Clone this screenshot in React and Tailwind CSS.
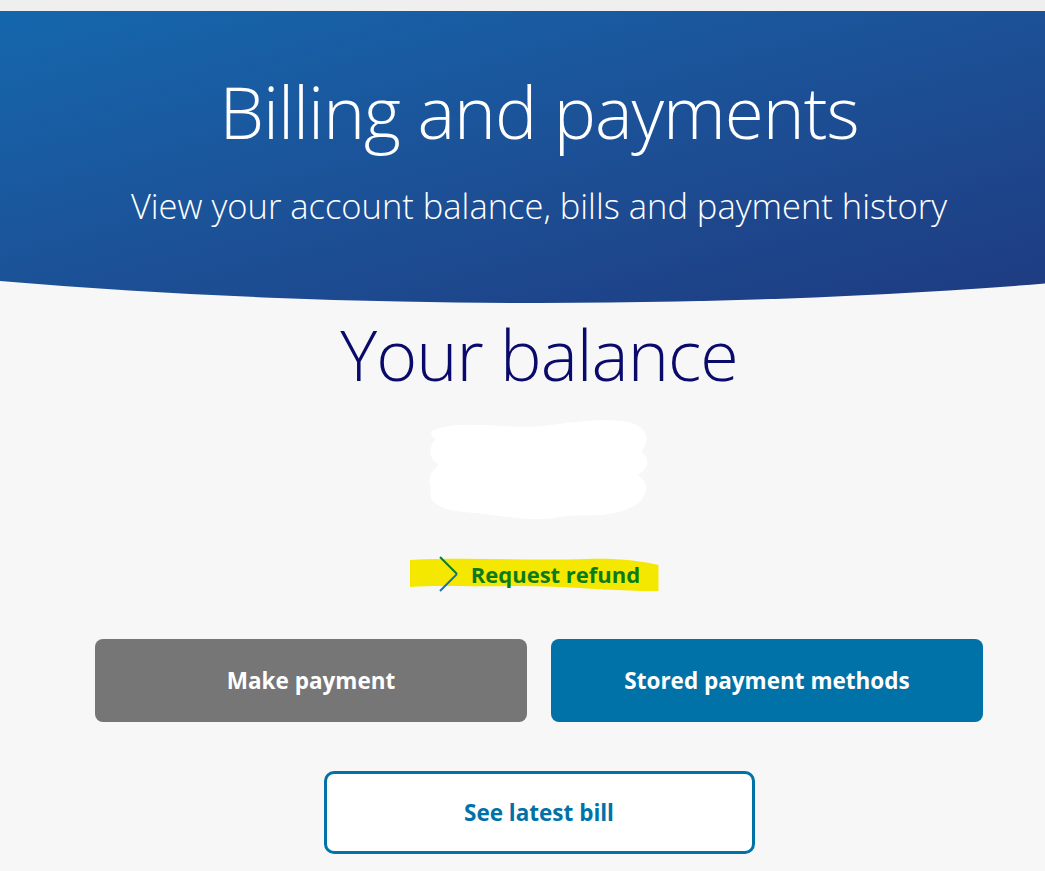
export default function App() {
  return (
    <div className="h-[871px] overflow-hidden bg-[#f7f7f7] font-['Open_Sans',sans-serif]">
      {/* page column is a bit wider than the viewport, so it sits slightly right of centre */}
      <div className="w-[1078px]">
        <div className="h-[11px] bg-[#efefef]" />

        {/* Hero */}
        <div className="h-[292px] bg-gradient-to-br from-[#1467ad] to-[#1e3a80] [clip-path:ellipse(131%_100%_at_50%_0%)] flex flex-col items-center text-white">
          <h1 className="mt-[65px] text-[71px] font-light leading-none tracking-[-1px]">Billing and payments</h1>
          <p className="mt-[42px] text-[34.5px] font-light leading-none">
            View your account balance, bills and payment history
          </p>
        </div>

        <div className="flex flex-col items-center">
          <h2 className="mt-[16px] text-[70px] font-light leading-none tracking-[-1px] text-[#0a0a6b]">Your balance</h2>

          {/* redacted amount */}
          <svg className="mt-[29px]" width="228" height="104" viewBox="0 0 228 106">
            <path
              d="M14 10 C40 2 90 12 120 8 C150 4 180 0 205 4 C225 8 228 24 218 34 C228 42 226 52 214 58 C228 64 226 84 206 92 C180 104 150 96 130 102 C100 106 70 98 40 96 C10 94 0 84 4 72 C0 62 4 54 12 48 C0 40 2 30 8 22 C0 14 6 12 14 10 Z"
              fill="#ffffff"
            />
          </svg>

          {/* Request refund */}
          <div className="relative mt-[33px] -ml-[10px] flex items-center gap-[11px] pl-[30px] pr-[20px] h-[38px]">
            <svg className="absolute inset-0" width="100%" height="38" viewBox="0 0 254 38" preserveAspectRatio="none">
              <path d="M2 5 C60 2 120 6 180 4 C210 3 235 6 252 10 L252 36 C200 36 150 30 100 31 C60 32 30 30 2 32 Z" fill="#f4e800" />
            </svg>
            <svg className="relative" width="22" height="36" viewBox="0 0 22 36">
              <path d="M2 1 L19 18" stroke="#0a7a2a" strokeWidth="2" fill="none" />
              <path d="M19 18 L2 35" stroke="#1a6fb0" strokeWidth="2" fill="none" />
            </svg>
            <span className="relative text-[22px] font-bold text-[#0b7a1c] leading-none">Request refund</span>
          </div>

          {/* Actions */}
          <div className="mt-[46px] w-full px-[95px] grid grid-cols-2 gap-[24px]">
            <button className="h-[83px] rounded-[8px] bg-[#767676] text-white text-[22.5px] font-bold">Make payment</button>
            <button className="h-[83px] rounded-[8px] bg-[#0072a8] text-white text-[22.5px] font-bold">Stored payment methods</button>
          </div>

          <button className="mt-[49px] w-[431px] h-[83px] rounded-[10px] border-[3px] border-[#0072a8] bg-white text-[#0072a8] text-[22.5px] font-bold">
            See latest bill
          </button>
        </div>
      </div>
    </div>
  );
}
